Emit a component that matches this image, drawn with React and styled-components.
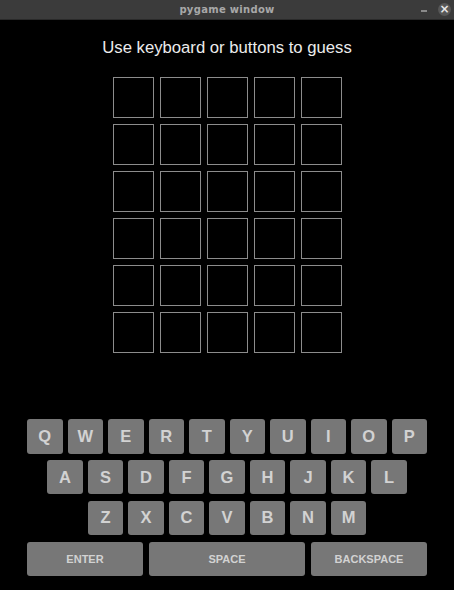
import styled, { createGlobalStyle } from "styled-components";

const GlobalStyle = createGlobalStyle`
	html, body {
		margin: 0;
		padding: 0;
		background: #000;
	}
	* {
		box-sizing: border-box;
	}
`;

const ROWS = 6;
const COLS = 5;
const KEY_ROWS = ["QWERTYUIOP", "ASDFGHJKL", "ZXCVBNM"];

const App = () => {
	return (
		<Wrapper>
			<GlobalStyle />
			<TitleBar>
				<span className="title">pygame window</span>
				<div className="controls">
					<span className="min" />
					<span className="close">×</span>
				</div>
			</TitleBar>
			<Screen>
				<Heading>Use keyboard or buttons to guess</Heading>
				<Board>
					{Array.from({ length: ROWS * COLS }).map((_, i) => (
						<Cell key={i} />
					))}
				</Board>
				<Keyboard>
					{KEY_ROWS.map((row) => (
						<KeyRow key={row}>
							{row.split("").map((ch) => (
								<Key key={ch}>{ch}</Key>
							))}
						</KeyRow>
					))}
					<KeyRow $gap="6px">
						<Key $wide="116px" $small>ENTER</Key>
						<Key $wide="156px" $small>SPACE</Key>
						<Key $wide="116px" $small>BACKSPACE</Key>
					</KeyRow>
				</Keyboard>
			</Screen>
		</Wrapper>
	);
};

const Wrapper = styled.div`
	width: 454px;
	height: 590px;
	display: flex;
	flex-direction: column;
	background: #000;
	font-family: "Liberation Sans", Arial, sans-serif;
	overflow: hidden;
`;

const TitleBar = styled.header`
	position: relative;
	height: 20px;
	flex-shrink: 0;
	background: #3b3b3b;
	border-bottom: 1px solid #2a2a2a;
	display: flex;
	align-items: center;
	justify-content: center;
	.title {
		font-family: "DejaVu Sans", sans-serif;
		font-size: 10px;
		font-weight: 700;
		color: #a8a8a8;
		letter-spacing: 0.3px;
	}
	.controls {
		position: absolute;
		right: 3px;
		top: 3px;
		display: flex;
		align-items: center;
		gap: 11px;
	}
	.min {
		width: 6px;
		height: 2px;
		background: #8a8a8a;
		margin-top: 3px;
	}
	.close {
		width: 13px;
		height: 13px;
		border-radius: 50%;
		background: #575757;
		color: #e8e8e8;
		font-family: "DejaVu Sans", sans-serif;
		font-size: 12px;
		font-weight: 700;
		line-height: 13px;
		text-align: center;
	}
`;

const Screen = styled.main`
	flex: 1;
	display: flex;
	flex-direction: column;
	align-items: center;
	padding-bottom: 14px;
`;

const Heading = styled.h1`
	margin: 18px 0 0;
	height: 20px;
	line-height: 20px;
	font-size: 16.7px;
	font-weight: 400;
	color: #ececec;
`;

const Board = styled.div`
	margin-top: 19px;
	display: grid;
	grid-template-columns: repeat(${COLS}, 41px);
	grid-auto-rows: 41px;
	gap: 6px;
`;

const Cell = styled.div`
	border: 1.5px solid #8c8c8c;
`;

const Keyboard = styled.div`
	margin-top: auto;
	display: flex;
	flex-direction: column;
	align-items: center;
	gap: 6.3px;
`;

const KeyRow = styled.div`
	display: flex;
	gap: ${(p) => p.$gap || "5px"};
`;

const Key = styled.div`
	width: ${(p) => p.$wide || "35.5px"};
	height: 34.5px;
	flex-shrink: 0;
	border-radius: 3px;
	background: #777777;
	color: #d2d2d2;
	font-weight: 700;
	font-size: ${(p) => (p.$small ? "11px" : "16.5px")};
	display: flex;
	align-items: center;
	justify-content: center;
`;

export default App;
